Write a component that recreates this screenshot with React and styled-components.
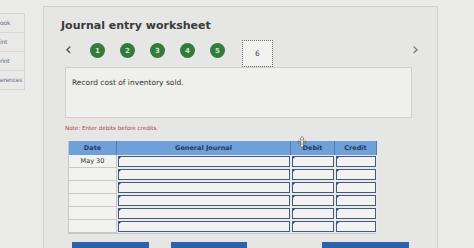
import React from 'react';
import styled, { createGlobalStyle } from 'styled-components';

const GlobalStyle = createGlobalStyle`
  html, body {
    margin: 0;
    padding: 0;
    background: #ebebea;
    overflow: hidden;
  }
  body {
    font-family: "DejaVu Sans", Verdana, sans-serif;
  }
`;

const Page = styled.div`
  display: flex;
  align-items: flex-start;
  width: 474px;
  height: 248px;
  padding-top: 6px;
  box-sizing: border-box;
  overflow: hidden;
`;

const Sidebar = styled.div`
  margin-top: 7px;
  width: 24px;
  border: 1px solid #d4d4d4;
  border-left: none;
  background: #e9e9e8;
`;

const SideItem = styled.div`
  height: 18px;
  line-height: 18px;
  font-size: 6px;
  letter-spacing: -0.2px;
  color: #61708c;
  white-space: nowrap;
  border-bottom: 1px solid #d6d6d6;
  &:last-child {
    border-bottom: none;
  }
`;

const Panel = styled.div`
  position: relative;
  margin-left: 18px;
  width: 395px;
  height: 260px;
  border: 1px solid #d0d0d0;
  background: #e6e6e5;
  box-sizing: border-box;
`;

const Title = styled.div`
  margin: 12px 0 0 17px;
  font-size: 11px;
  font-weight: bold;
  color: #3a3a3a;
`;

const Nav = styled.div`
  display: flex;
  align-items: center;
  height: 28px;
  margin: 7px 0 0 21px;
`;

const Arrow = styled.div`
  font-size: 17px;
  line-height: 17px;
  color: #4a4a4a;
  width: 10px;
  margin-top: -8px;
`;

const Steps = styled.div`
  display: flex;
  align-items: center;
  gap: 15px;
  margin-left: 15px;
  margin-top: -5px;
`;

const Step = styled.div`
  width: 15px;
  height: 15px;
  border-radius: 50%;
  background: #357a3d;
  color: #c9e6c5;
  font-size: 7px;
  font-weight: bold;
  display: flex;
  align-items: center;
  justify-content: center;
`;

const Current = styled.div`
  width: 31px;
  height: 27px;
  margin-left: 17px;
  border: 1px dotted #6b6b6b;
  background: #f1f1f0;
  font-size: 7.5px;
  color: #444;
  display: flex;
  align-items: center;
  justify-content: center;
  box-sizing: border-box;
`;

const NextArrow = styled(Arrow)`
  margin-left: auto;
  margin-right: 15px;
  color: #777;
`;

const Prompt = styled.div`
  margin: 0 0 0 21px;
  width: 347px;
  height: 51px;
  border: 1px solid #cfcfcf;
  background: #efefee;
  box-sizing: border-box;
  padding: 10px 0 0 6px;
  font-size: 7.5px;
  color: #333;
`;

const Note = styled.div`
  margin: 7px 0 0 21px;
  font-size: 5.6px;
  color: #a2474a;
`;

const Table = styled.div`
  margin: 10px 0 0 24px;
  width: 308px;
  display: grid;
  grid-template-columns: 48px 174px 44px 42px;
  border: 1px solid #c7c7c7;
  border-top: none;
  box-sizing: border-box;
`;

const Head = styled.div`
  height: 14px;
  background: #6fa1d8;
  border-right: 1px solid #4f7fb8;
  color: #1e3a64;
  font-size: 6.5px;
  font-weight: bold;
  display: flex;
  align-items: center;
  justify-content: center;
  &:last-of-type {
    border-right: none;
  }
`;

const DateCell = styled.div`
  height: 13px;
  border-bottom: 1px solid #c9c9c9;
  border-right: 1px solid #c9c9c9;
  background: #f2f2f1;
  font-size: 6.5px;
  color: #333;
  display: flex;
  align-items: center;
  justify-content: center;
  box-sizing: border-box;
`;

const Cell = styled.div`
  height: 13px;
  padding: 1px 1px 0 1px;
  box-sizing: border-box;
  background: #e9e9e8;
`;

const Input = styled.div`
  position: relative;
  height: 11px;
  border: 1px solid #44597f;
  background: #f2f2f1;
  box-sizing: border-box;
  &::before {
    content: '';
    position: absolute;
    left: 0;
    top: 0;
    border-left: 2px solid #2c3f66;
    border-bottom: 2px solid transparent;
  }
`;

const Buttons = styled.div`
  display: flex;
  margin: 8px 0 0 28px;
`;

const Button = styled.div`
  width: ${(p) => p.w}px;
  margin-left: ${(p) => p.ml}px;
  height: 16px;
  background: #2a62ae;
`;

const Cursor = styled.svg`
  position: absolute;
  left: 253px;
  top: 129px;
`;

const rows = ['May 30', '', '', '', '', ''];

export default function App() {
  return (
    <>
      <GlobalStyle />
      <Page>
        <Sidebar>
          <SideItem>ook</SideItem>
          <SideItem>int</SideItem>
          <SideItem>rint</SideItem>
          <SideItem>erences</SideItem>
        </Sidebar>
        <Panel>
          <Title>Journal entry worksheet</Title>
          <Nav>
            <Arrow>&lsaquo;</Arrow>
            <Steps>
              {[1, 2, 3, 4, 5].map((n) => (
                <Step key={n}>{n}</Step>
              ))}
            </Steps>
            <Current>6</Current>
            <NextArrow>&rsaquo;</NextArrow>
          </Nav>
          <Prompt>Record cost of inventory sold.</Prompt>
          <Note>Note: Enter debits before credits.</Note>
          <Table>
            <Head>Date</Head>
            <Head>General Journal</Head>
            <Head>Debit</Head>
            <Head>Credit</Head>
            {rows.map((d, i) => (
              <React.Fragment key={i}>
                <DateCell>{d}</DateCell>
                <Cell><Input /></Cell>
                <Cell><Input /></Cell>
                <Cell><Input /></Cell>
              </React.Fragment>
            ))}
          </Table>
          <Buttons>
            <Button w={77} ml={0} />
            <Button w={76} ml={22} />
            <Button w={87} ml={75} />
          </Buttons>
          <Cursor width="10" height="12" viewBox="0 0 10 12">
            <path d="M5 0.5 L7 3 H6 V5.5 H8.5 V4.5 L9.5 6 L8.5 7.5 V6.5 H6 V9 H7 L5 11.5 L3 9 H4 V6.5 H1.5 V7.5 L0.5 6 L1.5 4.5 V5.5 H4 V3 H3 Z" fill="#f4f4f4" stroke="#555" strokeWidth="0.6" />
          </Cursor>
        </Panel>
      </Page>
    </>
  );
}
